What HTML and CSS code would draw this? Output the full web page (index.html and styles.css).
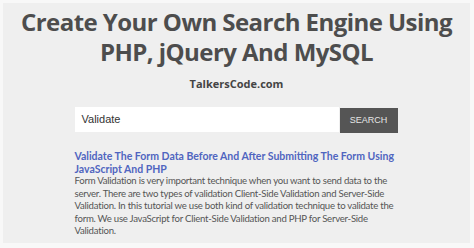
FILE: index.html
```html
<!DOCTYPE html>
<html>
<head>
<meta charset="utf-8">
<link rel="stylesheet" href="styles.css">
</head>
<body>
<div class="frame">
  <h1 class="title">Create Your Own Search Engine Using PHP, jQuery And MySQL</h1>
  <p class="site">TalkersCode.com</p>
  <form class="search">
    <div class="input">Validate</div>
    <div class="btn">SEARCH</div>
  </form>
  <div class="result">
    <h2 class="result-title">Validate The Form Data Before And After Submitting The Form Using JavaScript And PHP</h2>
    <p class="result-text">Form Validation is very important technique when you want to send data to the server. There are two types of validation Client-Side Validation and Server-Side Validation. In this tutorial we use both kind of validation technique to validate the form. We use JavaScript for Client-Side Validation and PHP for Server-Side Validation.</p>
  </div>
</div>
</body>
</html>
```

FILE: styles.css
```css
html, body {
  margin: 0;
  padding: 0;
  background: #f8f8f8;
}
.frame {
  margin: 3px 4px 5px 3px;
  height: 240px;
  background: #efefef;
  display: flex;
  flex-direction: column;
  align-items: center;
  box-sizing: border-box;
  padding-top: 4px;
}
.title {
  margin: 0;
  width: 460px;
  text-align: center;
  font-family: "Open Sans", sans-serif;
  font-weight: 700;
  font-size: 24px;
  line-height: 30px;
  color: #4d4d4d;
  letter-spacing: -0.55px;
}
.site {
  margin: 10px 0 0;
  font-family: "Open Sans", sans-serif;
  font-weight: 700;
  font-size: 11px;
  line-height: 14px;
  color: #444;
}
.search {
  margin: 16px 0 0;
  display: flex;
  width: 323px;
  margin-left: -1px;
}
.input {
  flex: 1;
  height: 25px;
  background: #fff;
  box-sizing: border-box;
  padding: 0 7px;
  font-family: "Liberation Sans", Arial, sans-serif;
  font-size: 11px;
  line-height: 25px;
  color: #333;
}
.btn {
  width: 58px;
  height: 25px;
  margin-top: 1px;
  margin-left: 1px;
  background: #555;
  color: #e6e6e6;
  font-family: "Liberation Sans", Arial, sans-serif;
  font-size: 9px;
  line-height: 25px;
  text-align: center;
}
.result {
  width: 323px;
  margin-top: 17px;
  margin-left: -1px;
}
.result-title {
  margin: 0;
  font-family: "Lato", sans-serif;
  font-weight: 700;
  font-size: 10.5px;
  line-height: 12.5px;
  color: #5065c0;
}
.result-text {
  margin: 0;
  font-family: "Lato", sans-serif;
  font-size: 9.6px;
  line-height: 12.5px;
  color: #555;
  letter-spacing: -0.25px;
}
```
